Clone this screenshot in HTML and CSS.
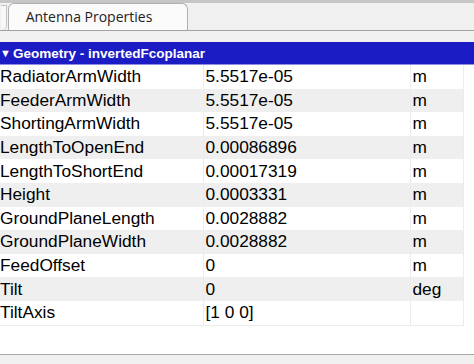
FILE: index.html
```html
<!DOCTYPE html>
<html lang="en">
<head>
  <meta charset="UTF-8">
  <title>Antenna Properties</title>
  <link rel="stylesheet" href="styles.css">
</head>
<body>

<div id="tab-bar">
  <div class="tab-stub"></div>
  <div class="tab active-tab">Antenna Properties</div>
</div>

<div id="panel">
  <div class="group-header"><span class="arrow">&#9660;</span>Geometry - invertedFcoplanar</div>

  <table id="props">
    <colgroup>
      <col class="col-name">
      <col class="col-value">
      <col class="col-unit">
    </colgroup>
    <tr><td>RadiatorArmWidth</td><td>5.5517e-05</td><td>m</td></tr>
    <tr><td>FeederArmWidth</td><td>5.5517e-05</td><td>m</td></tr>
    <tr><td>ShortingArmWidth</td><td>5.5517e-05</td><td>m</td></tr>
    <tr><td>LengthToOpenEnd</td><td>0.00086896</td><td>m</td></tr>
    <tr><td>LengthToShortEnd</td><td>0.00017319</td><td>m</td></tr>
    <tr><td>Height</td><td>0.0003331</td><td>m</td></tr>
    <tr><td>GroundPlaneLength</td><td>0.0028882</td><td>m</td></tr>
    <tr><td>GroundPlaneWidth</td><td>0.0028882</td><td>m</td></tr>
    <tr><td>FeedOffset</td><td>0</td><td>m</td></tr>
    <tr><td>Tilt</td><td>0</td><td>deg</td></tr>
    <tr><td>TiltAxis</td><td>[1 0 0]</td><td></td></tr>
  </table>
</div>

<div id="status-bar"></div>

</body>
</html>
```

FILE: styles.css
```css
html, body {
  margin: 0;
  padding: 0;
}

body {
  width: 474px;
  height: 364px;
  overflow: hidden;
  background-color: #f0f0f0;
  font-family: "Liberation Sans", Arial, sans-serif;
}

#tab-bar {
  height: 27px;
  border-top: 3px solid #c6c6c6;
  border-bottom: 1px solid #a3a3a3;
  background-color: #f0f0f0;
  display: flex;
  align-items: flex-end;
}

.tab-stub {
  width: 5px;
  height: 24px;
  margin-left: 1px;
  border: 1px solid #c4c4c4;
  border-bottom: none;
  border-left: none;
  border-radius: 0 0 5px 0;
  background-color: #f7f7f7;
}

.tab {
  box-sizing: border-box;
  width: 180px;
  height: 27px;
  margin-left: 1px;
  border: 1px solid #b0b0b0;
  border-bottom: none;
  border-radius: 6px 6px 0 0;
  background-color: #fbfbfb;
  font-family: "Open Sans", sans-serif;
  font-size: 14px;
  color: #222;
  text-align: center;
  line-height: 25px;
  padding-right: 18px;
}

#panel {
  height: 312px;
  margin-top: 11px;
  background-color: #fff;
  border-bottom: 1px solid #a8a8a8;
}

.group-header {
  display: flex;
  align-items: center;
  height: 22px;
  background-color: #1c1cc4;
  color: #fff;
  font-weight: bold;
  font-size: 13.5px;
  border-bottom: 1px solid #8f8fe0;
}

.arrow {
  width: 13px;
  flex-shrink: 0;
  font-size: 11px;
}

#props {
  width: 463px;
  border-collapse: collapse;
  table-layout: fixed;
  font-size: 17.3px;
  color: #000;
}

.col-name { width: 203px; }
.col-value { width: 207px; }
.col-unit { width: 53px; }

#props td {
  height: 23.6px;
  padding: 0;
  border: 1px solid #ececec;
  border-top: none;
  border-bottom: none;
  white-space: nowrap;
  overflow: hidden;
  line-height: 23px;
}

#props td:first-child {
  border-left: none;
}

#props td + td {
  padding-left: 2px;
}

#props tr:nth-child(even) td {
  background-color: #efefef;
}

#props tr:last-child td {
  border-bottom: 1px solid #ececec;
}

#status-bar {
  height: 8px;
  background-color: #f0f0f0;
}
```
